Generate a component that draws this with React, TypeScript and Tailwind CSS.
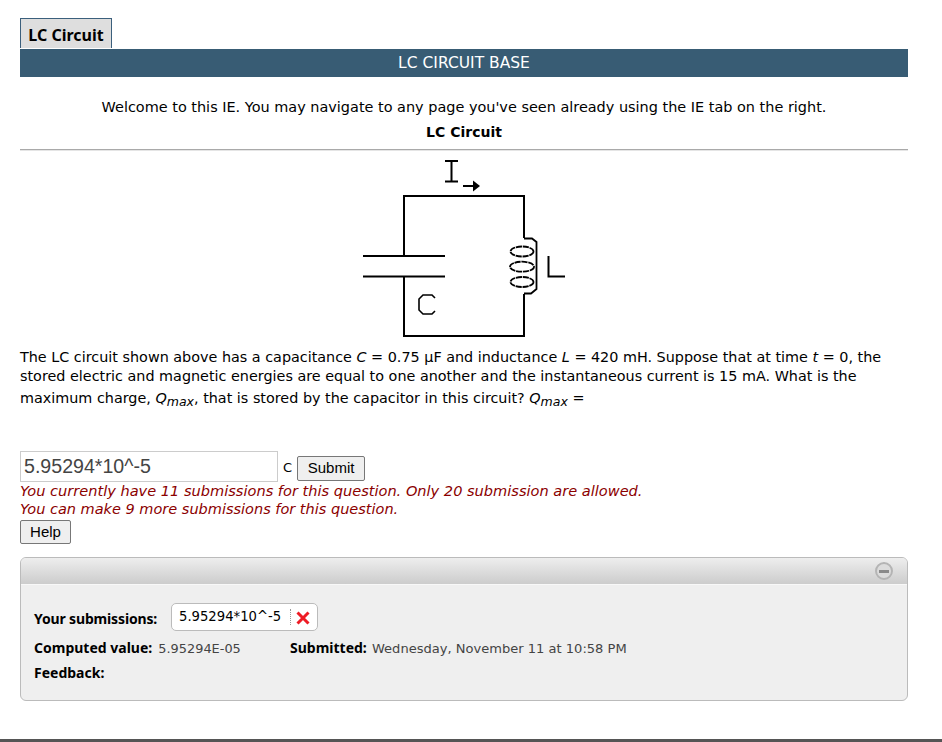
const FONT = "font-['DejaVu_Sans',Verdana,sans-serif]";
const BOLD = "font-['Noto_Sans',sans-serif] font-bold text-black";

function CircuitDiagram() {
  return (
    <svg viewBox="340 151 248 190" className="block mx-auto w-[248px] h-[190px]" fill="none" stroke="#000">
      {/* wires */}
      <path d="M404 256V196H524V238" strokeWidth="2" />
      <path d="M404 277V336H524V294" strokeWidth="2" />
      {/* capacitor */}
      <path d="M363 256H445M363 276.500H445" strokeWidth="2" />
      {/* inductor */}
      <path d="M524 238.500H532L536.500 242V289L531 293.500H524" strokeWidth="1.800" />
      <ellipse cx="522" cy="251.500" rx="11.500" ry="5" strokeWidth="1.800" strokeDasharray="6 0.800" />
      <ellipse cx="522" cy="266.700" rx="12" ry="5" strokeWidth="1.800" strokeDasharray="6 0.800" />
      <ellipse cx="522" cy="282" rx="11.500" ry="5" strokeWidth="1.800" strokeDasharray="6 0.800" />
      {/* I label */}
      <path d="M445 161H458M451.500 161V181.500M445 181.500H458" strokeWidth="2" />
      <path d="M463 186H476" strokeWidth="2" />
      <path d="M473 180.500L480 186L473 191.500Z" fill="#000" stroke="none" />
      {/* L label */}
      <path d="M548.500 256V276.500H565" strokeWidth="2" />
      {/* C label */}
      <path d="M435 298L432 295H423L419 299V310L423 314H432L435 311" strokeWidth="1.600" />
    </svg>
  );
}

function MinusIcon() {
  return (
    <div className="w-[18px] h-[18px] rounded-full bg-[#dcdcdc] border-2 border-[#b4b4b4] flex items-center justify-center">
      <div className="w-[10px] h-[3px] bg-[#8a8a8a]" />
    </div>
  );
}

export default function App() {
  return (
    <div className={`${FONT} w-[942px] h-[742px] bg-white text-black overflow-hidden flex flex-col`}>
      <div className="flex-1 px-5 pt-[18px] w-[928px]">
        <div className="flex">
          <div className={`${BOLD} h-[30px] w-[92px] pt-[2px] border border-b-0 border-[#3b5f7c] bg-[#dedede] flex items-center justify-center text-[16px]`}>
            LC Circuit
          </div>
        </div>
        <div className="mt-px h-[28px] bg-[#385c74] text-white text-center text-[15.500px] font-medium leading-[28px]">
          LC CIRCUIT BASE
        </div>

        <p className="mt-[20px] text-center text-[14.440px] leading-[20px]">
          Welcome to this IE. You may navigate to any page you've seen already using the IE tab on the right.
        </p>
        <p className="mt-[5px] text-center text-[14px] font-bold leading-[20px]">LC Circuit</p>
        <div className="mt-[7px] h-[2px] bg-[#a9a9a9] border-b border-[#e5e5e5]" />

        <CircuitDiagram />

        <p className="mt-[7px] text-[14.370px] leading-[19px]">
          The LC circuit shown above has a capacitance <i>C</i> = 0.75 µF and inductance <i>L</i> = 420 mH. Suppose that at time <i>t</i> = 0, the stored electric and magnetic energies are equal to one another and the instantaneous current is 15 mA. What is the <span className="whitespace-nowrap"><span className="inline-block w-0 h-[17px]" />maximum</span> charge, <i>Q<sub className="text-[12.500px]">max</sub></i>, that is stored by the capacitor in this circuit? <i>Q<sub className="text-[12.500px]">max</sub></i> =
        </p>

        <div className="mt-[43px] flex items-center h-[31px]">
          <div className="w-[258px] h-[31px] border border-[#cccccc] flex items-center pl-[3px] font-['Liberation_Sans',Arial,sans-serif] text-[19.600px] text-[#444444]">
            5.95294*10^-5
          </div>
          <span className="ml-[5px] text-[13px] mt-[2px]">C</span>
          <button className="ml-[5px] h-[25px] w-[68px] mt-[3px] border border-[#777777] rounded-[2px] bg-[#efefef] font-['Liberation_Sans',Arial,sans-serif] text-[15px] text-black">
            Submit
          </button>
        </div>
        <p className="-mt-px text-[14.570px] italic leading-[19px] text-[#8b0000]">
          You currently have 11 submissions for this question. Only 20 submission are allowed.
        </p>
        <p className="text-[14.500px] italic leading-[19px] text-[#8b0000]">
          You can make 9 more submissions for this question.
        </p>
        <button className="block mt-px h-[24px] w-[51px] border border-[#777777] rounded-[2px] bg-[#efefef] font-['Liberation_Sans',Arial,sans-serif] text-[15px] text-black">
          Help
        </button>

        <div className="mt-[13px] h-[144px] border border-[#bbbbbb] rounded-[6px] bg-[#efefef] overflow-hidden">
          <div className="h-[27px] border-b border-[#f8f8f8] bg-gradient-to-b from-[#eeeeee] to-[#cccccc] flex items-center justify-end pr-[14px]">
            <MinusIcon />
          </div>
          <div className="px-[13px] pt-[18px] text-[13px]">
            <div className="flex items-center h-[28px]">
              <span className={`${BOLD} w-[137px] whitespace-nowrap text-[14px] tracking-[-0.15px] pt-[2px]`}>Your submissions:</span>
              <div className="h-[28px] w-[147px] border border-[#bbbbbb] rounded-[5px] bg-white flex items-center pl-[7px] text-[13.200px]">
                <span className="mr-[9px]">5.95294*10^-5</span>
                <span className="h-[16px] border-l border-dotted border-[#999999]" />
                <svg viewBox="0 0 14 14" className="ml-[5px] mt-[2px] w-[14px] h-[14px]" fill="none" stroke="#ee1c25" strokeWidth="3">
                  <path d="M1.500 1.500L12.500 12.500M12.500 1.500L1.500 12.500" />
                </svg>
              </div>
            </div>
            <div className="mt-[4px] flex h-[25px] items-center text-[#444444]">
              <span className="w-[256px] text-[12.900px]"><b className={`${BOLD} text-[14px] mr-[2px]`}>Computed value:</b> 5.95294E-05</span>
              <span className="text-[13.050px]"><b className={`${BOLD} text-[14px] mr-px`}>Submitted:</b> Wednesday, November 11 at 10:58 PM</span>
            </div>
            <div className={`${BOLD} h-[25px] flex items-center text-[14px]`}>Feedback:</div>
          </div>
        </div>
      </div>
      <div className="h-[3px] bg-[#555555]" />
    </div>
  );
}
